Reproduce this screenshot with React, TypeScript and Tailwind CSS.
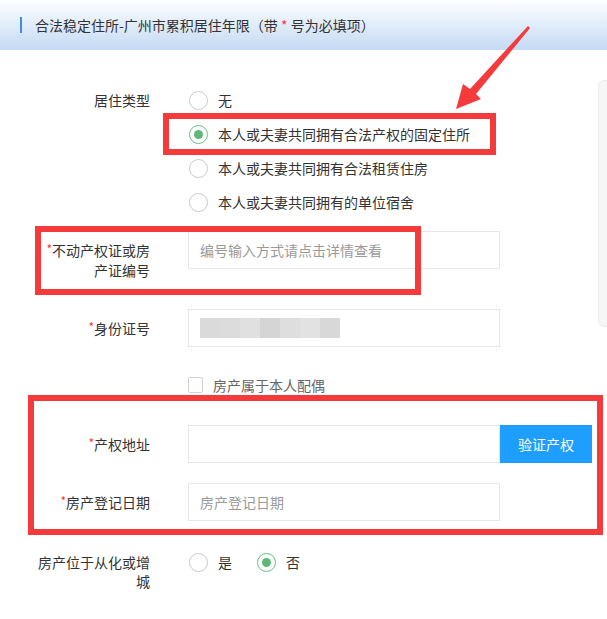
import React from "react";

const font = { fontFamily: '"Noto Sans CJK SC", "Noto Sans", sans-serif' };

function Star() {
  return <span className="text-[#f33] text-[12px] align-top relative top-[-1px]">*</span>;
}

function Radio({ checked, label }: { checked?: boolean; label: string }) {
  return (
    <div className="flex items-center h-[34px]">
      <span
        className={`w-[19px] h-[19px] rounded-full border-[1.5px] flex items-center justify-center ${
          checked ? "border-[#6dbd86]" : "border-[#cbcbcb]"
        }`}
      >
        {checked && <span className="w-[9px] h-[9px] rounded-full bg-[#5fb878]" />}
      </span>
      <span className="ml-[10px] text-[14px] text-[#333] leading-[20px]">{label}</span>
    </div>
  );
}

function Input({ placeholder }: { placeholder?: string }) {
  return (
    <input
      readOnly
      placeholder={placeholder}
      className="w-[312px] h-[38px] border border-[#e6e6e6] pl-[11px] text-[14px] outline-none placeholder:text-[#9a9a9a] bg-white"
    />
  );
}

export default function App() {
  return (
    <div className="relative w-[607px] h-[619px] bg-white overflow-hidden" style={font}>
      {/* Title bar */}
      <div className="h-[50px] bg-gradient-to-b from-[#fdfeff] to-[#c4daf3] flex items-center pl-[20px]">
        <span className="w-[2px] h-[16px] bg-[#3b8ee2]" />
        <span className="ml-[13px] text-[14px] text-[#333] leading-[20px]">
          合法稳定住所-广州市累积居住年限（带 <span className="text-[#f33]">*</span> 号为必填项）
        </span>
      </div>

      {/* Form */}
      <div className="pt-[33px]">
        <div className="flex">
          <div className="w-[150px] shrink-0 text-right text-[14px] text-[#333] leading-[34px]">居住类型</div>
          <div className="ml-[39px] flex flex-col">
            <Radio label="无" />
            <Radio checked label="本人或夫妻共同拥有合法产权的固定住所" />
            <Radio label="本人或夫妻共同拥有合法租赁住房" />
            <Radio label="本人或夫妻共同拥有的单位宿舍" />
          </div>
        </div>

        <div className="flex mt-[12px]">
          <div className="w-[150px] shrink-0 text-right text-[14px] text-[#333] leading-[20px] pt-[9px]">
            <div>
              <Star />
              不动产权证或房
            </div>
            <div>产证编号</div>
          </div>
          <div className="ml-[38px]">
            <Input placeholder="编号输入方式请点击详情查看" />
          </div>
        </div>

        <div className="flex mt-[29px]">
          <div className="w-[150px] shrink-0 text-right text-[14px] text-[#333] leading-[38px]">
            <Star />
            身份证号
          </div>
          <div className="ml-[38px] relative w-[312px] h-[38px] border border-[#e6e6e6] flex items-center pl-[11px]">
            <div className="flex h-[20px] blur-[0.6px]">
              <span className="w-[20px] bg-[#dadada]" />
              <span className="w-[20px] bg-[#dcdcdc]" />
              <span className="w-[20px] bg-[#e0e0e0]" />
              <span className="w-[20px] bg-[#d5d5d5]" />
              <span className="w-[20px] bg-[#dedede]" />
              <span className="w-[20px] bg-[#e2e2e2]" />
              <span className="w-[20px] bg-[#d8d8d8]" />
            </div>
          </div>
        </div>

        <div className="flex mt-[30px] h-[16px] items-center">
          <div className="w-[150px] shrink-0" />
          <span className="ml-[38px] w-[15px] h-[16px] border border-[#d2d2d2] rounded-[2px]" />
          <span className="ml-[10px] text-[14px] text-[#666] leading-[20px]">房产属于本人配偶</span>
        </div>

        <div className="flex mt-[32px]">
          <div className="w-[150px] shrink-0 text-right text-[14px] text-[#333] leading-[38px]">
            <Star />
            产权地址
          </div>
          <div className="ml-[38px] flex">
            <Input />
            <button className="w-[92px] h-[38px] bg-[#1e9fff] text-white text-[14px]">验证产权</button>
          </div>
        </div>

        <div className="flex mt-[20px]">
          <div className="w-[150px] shrink-0 text-right text-[14px] text-[#333] leading-[38px]">
            <Star />
            房产登记日期
          </div>
          <div className="ml-[38px]">
            <Input placeholder="房产登记日期" />
          </div>
        </div>

        <div className="flex mt-[24px]">
          <div className="w-[150px] shrink-0 text-right text-[14px] text-[#333] leading-[19px] pt-[8px]">
            <div>房产位于从化或增</div>
            <div>城</div>
          </div>
          <div className="ml-[39px] flex gap-[25px]">
            <Radio label="是" />
            <Radio checked label="否" />
          </div>
        </div>
      </div>

      {/* Side panel peeking in */}
      <div className="absolute left-[598px] top-[80px] w-[24px] h-[247px] rounded-[6px] bg-[#f6f6f6] border border-[#ededed]" />

      {/* Annotation boxes */}
      <div className="absolute left-[163px] top-[113px] w-[333px] h-[42px] border-[6px] border-[#f43a3a]" />
      <div className="absolute left-[35px] top-[226px] w-[386px] h-[69px] border-[6px] border-[#f43a3a]" />
      <div className="absolute left-[28px] top-[395px] w-[575px] h-[140px] border-[6px] border-[#f43a3a]" />

      {/* Annotation arrow */}
      <svg className="absolute left-0 top-0" width="607" height="619" viewBox="0 0 607 619">
        <polygon
          points="456,109 463,84 470,89 528,26 530,28 476,94 481,99"
          fill="#f43a3a"
        />
      </svg>
    </div>
  );
}
